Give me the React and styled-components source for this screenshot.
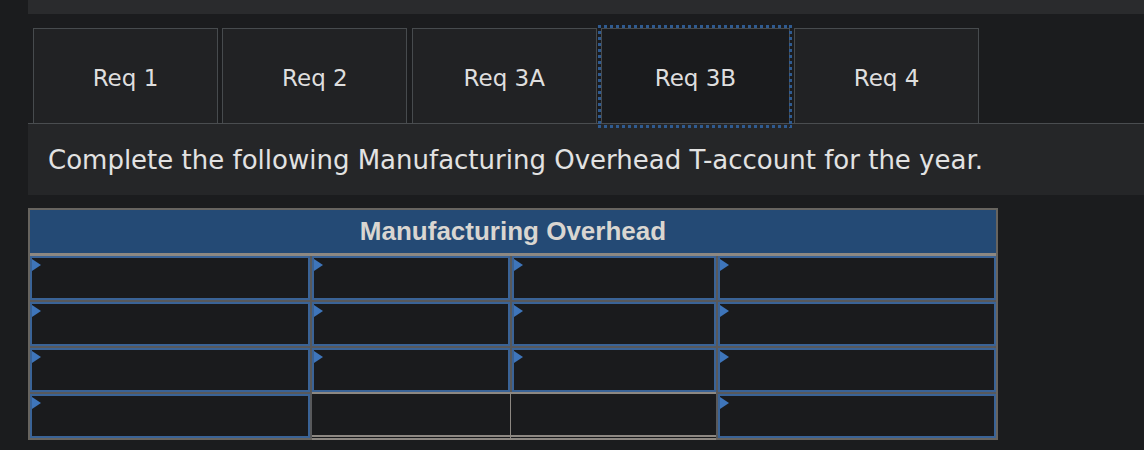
import React from 'react';
import styled, { createGlobalStyle, css } from 'styled-components';

const GlobalStyle = createGlobalStyle`
  html, body {
    margin: 0;
    padding: 0;
    background: #1b1c1e;
  }
  * {
    box-sizing: border-box;
  }
`;

const tabs = ['Req 1', 'Req 2', 'Req 3A', 'Req 3B', 'Req 4'];
const ACTIVE = 'Req 3B';

const dots = (dir) =>
  `repeating-linear-gradient(${dir}, #2f5b91 0 3px, transparent 3px 6px)`;

const Page = styled.div`
  width: 1144px;
  height: 450px;
  overflow: hidden;
  padding-left: 28px;
  background: #1b1c1e;
  font-family: "DejaVu Sans", Verdana, sans-serif;
`;

const TopStrip = styled.div`
  height: 14px;
  background: #2a2b2d;
`;

const TabRow = styled.div`
  display: flex;
  align-items: flex-end;
  gap: 4.4px;
  height: 95px;
  margin-top: 14px;
  padding-left: 5px;
`;

const Tab = styled.div`
  width: ${p => (p.$active ? '188.5px' : '185px')};
  flex-shrink: 0;
  height: 95px;
  display: flex;
  align-items: center;
  justify-content: center;
  padding-top: 3px;
  border: 1px solid #474b4e;
  border-bottom: none;
  background: ${p => (p.$active ? '#1a1b1d' : '#212224')};
  color: #dedede;
  font-size: 23px;
  position: relative;
  z-index: ${p => (p.$active ? 1 : 0)};

  ${p => p.$active && css`
    &::after {
      content: '';
      position: absolute;
      inset: -4px -3px -5px -4px;
      pointer-events: none;
      background:
        ${dots('90deg')} top left / 100% 3px no-repeat,
        ${dots('90deg')} bottom left / 100% 3px no-repeat,
        ${dots('180deg')} top left / 3px 100% no-repeat,
        ${dots('180deg')} top right / 3px 100% no-repeat;
    }
  `}
`;

const Panel = styled.div`
  height: 72px;
  display: flex;
  align-items: center;
  padding-left: 20px;
  border-top: 1px solid #4a4d50;
  background: #252628;
  color: #e2e2e2;
  font-size: 26px;
`;

const TAccount = styled.div`
  width: 970px;
  margin-top: 13px;
  border: 2px solid #67645f;
`;

const Header = styled.div`
  height: 46px;
  display: flex;
  align-items: center;
  justify-content: center;
  background: #244a75;
  border-bottom: 3px solid #8d8882;
  color: #d9d6d1;
  font-family: "Liberation Sans", Arial, sans-serif;
  font-weight: bold;
  font-size: 26px;
`;

const Body = styled.div`
  display: grid;
  grid-template-columns: 280px 198px 204px 1fr;
  grid-auto-rows: 44px;
  gap: 2px;
  background: #58595b;
`;

const Entry = styled.div`
  position: relative;
  border: 2px solid #3a6396;
  background: #1a1b1d;

  &::before {
    content: '';
    position: absolute;
    left: 0;
    top: 1px;
    border-left: 9px solid #3e75ba;
    border-top: 6px solid transparent;
    border-bottom: 6px solid transparent;
  }
`;

const Total = styled.div`
  margin-top: -2px;
  margin-bottom: -2px;
  margin-left: ${p => (p.$joined ? '-2px' : '0')};
  background: #1a1b1d;
  border-top: 2px solid #8d8882;
  border-bottom: 5px double #8d8882;
  border-left: ${p => (p.$joined ? '1px solid #8d8882' : 'none')};
`;

export default function App() {
  return (
    <>
      <GlobalStyle />
      <Page>
        <TopStrip />
        <TabRow>
          {tabs.map(t => (
            <Tab key={t} $active={t === ACTIVE}>{t}</Tab>
          ))}
        </TabRow>
        <Panel>Complete the following Manufacturing Overhead T-account for the year.</Panel>
        <TAccount>
          <Header>Manufacturing Overhead</Header>
          <Body>
            {Array.from({ length: 12 }).map((_, i) => (
              <Entry key={i} />
            ))}
            <Entry />
            <Total />
            <Total $joined />
            <Entry />
          </Body>
        </TAccount>
      </Page>
    </>
  );
}
